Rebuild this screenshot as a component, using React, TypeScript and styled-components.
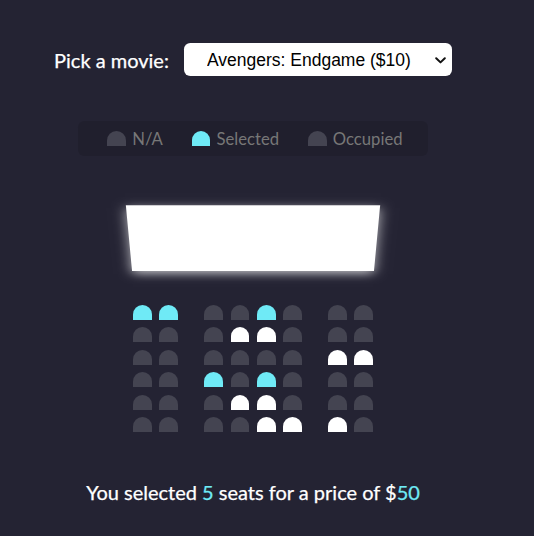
import React from "react";
import styled, { createGlobalStyle } from "styled-components";

const GlobalStyle = createGlobalStyle`
  * { box-sizing: border-box; }
  html, body { margin: 0; padding: 0; }
  body {
    background-color: #242333;
    color: #fff;
    font-family: Lato, "Noto Sans", sans-serif;
    font-size: 20px;
  }
`;

const Page = styled.div`
  display: flex;
  flex-direction: column;
  align-items: center;
  justify-content: center;
  height: 100vh;
  padding-right: 28px;
  padding-bottom: 8px;
`;

const MovieContainer = styled.div`
  margin: 25px 0;
  font-size: 20px;
  display: flex;
  align-items: center;
`;

const Label = styled.label`
  color: #fff;
  -webkit-text-stroke: 0.25px #fff;
`;

const SelectWrap = styled.span`
  position: relative;
  display: inline-block;
  margin-left: 15px;
`;

const Select = styled.select`
  display: block;
  width: 268px;
  height: 33px;
  background-color: #fff;
  border: 0;
  border-radius: 6.25px;
  font-family: "Liberation Sans", Arial, sans-serif;
  font-size: 17.5px;
  padding: 0 30px 0 23px;
  color: #000;
  outline: none;
  appearance: none;
  -webkit-appearance: none;
`;

const Chevron = styled.svg`
  position: absolute;
  right: 6px;
  top: 14px;
  width: 11px;
  height: 7px;
  pointer-events: none;
`;

const Showcase = styled.ul`
  background: rgba(0, 0, 0, 0.1);
  padding: 6.25px 12.5px;
  margin: 20px 0;
  border-radius: 6.25px;
  color: #777;
  list-style-type: none;
  display: flex;
  justify-content: space-between;
`;

const ShowcaseItem = styled.li`
  display: flex;
  align-items: center;
  justify-content: center;
  margin: 0 12.5px;
`;

const Small = styled.small`
  margin-left: 2.5px;
  font-size: 16.67px;
`;

type Status = "na" | "selected" | "occupied";

const seatColor: Record<Status, string> = {
  na: "#444451",
  selected: "#6feaf6",
  occupied: "#ffffff",
};

const Seat = styled.div<{ $status: Status; $gapRight?: boolean; $gapLeft?: boolean }>`
  background-color: ${(p) => seatColor[p.$status]};
  height: 15px;
  width: 18.75px;
  margin: 3.75px;
  margin-right: ${(p) => (p.$gapRight ? "22.5px" : "3.75px")};
  margin-left: ${(p) => (p.$gapLeft ? "22.5px" : "3.75px")};
  border-top-left-radius: 12.5px;
  border-top-right-radius: 12.5px;
`;

const Theatre = styled.div`
  perspective: 1250px;
  margin-bottom: 37.5px;
`;

const Screen = styled.div`
  background-color: #fff;
  height: 87.5px;
  width: 100%;
  margin: 18.75px 0;
  transform: rotateX(-45deg);
  box-shadow: 0 3.75px 12.5px rgba(255, 255, 255, 0.7);
`;

const Row = styled.div`
  display: flex;
`;

const Text = styled.p`
  margin: 6.25px 0;
  font-size: 20px;
  -webkit-text-stroke: 0.25px #fff;
`;

const Accent = styled.span`
  color: #6feaf6;
  -webkit-text-stroke: 0.25px #6feaf6;
`;

const layout: string[] = [
  "SSNNSNNN",
  "NNNOONNN",
  "NNNNNNOO",
  "NNSNSNNN",
  "NNNOONNN",
  "NNNNOOON",
];

const toStatus = (c: string): Status =>
  c === "S" ? "selected" : c === "O" ? "occupied" : "na";

export default function App() {
  const selectedCount = layout.join("").split("").filter((c) => c === "S").length;
  const price = 10;
  return (
    <>
      <GlobalStyle />
      <Page>
        <MovieContainer>
          <Label htmlFor="movie">Pick a movie:</Label>
          <SelectWrap>
            <Select id="movie" defaultValue="10">
              <option value="10">Avengers: Endgame ($10)</option>
              <option value="12">Joker ($12)</option>
              <option value="8">Toy Story 4 ($8)</option>
              <option value="9">The Lion King ($9)</option>
            </Select>
            <Chevron viewBox="0 0 11 7" aria-hidden="true">
              <path
                d="M1.2 1.2 L5.5 5.4 L9.8 1.2"
                fill="none"
                stroke="#111"
                strokeWidth="2"
                strokeLinecap="round"
                strokeLinejoin="round"
              />
            </Chevron>
          </SelectWrap>
        </MovieContainer>

        <Showcase>
          <ShowcaseItem>
            <Seat $status="na" />
            <Small>N/A</Small>
          </ShowcaseItem>
          <ShowcaseItem>
            <Seat $status="selected" />
            <Small>Selected</Small>
          </ShowcaseItem>
          <ShowcaseItem>
            <Seat $status="na" />
            <Small>Occupied</Small>
          </ShowcaseItem>
        </Showcase>

        <Theatre>
          <Screen />
          {layout.map((row, r) => (
            <Row key={r}>
              {row.split("").map((c, i) => (
                <Seat
                  key={i}
                  $status={toStatus(c)}
                  $gapRight={i === 1}
                  $gapLeft={i === row.length - 2}
                />
              ))}
            </Row>
          ))}
        </Theatre>

        <Text>
          You selected <Accent>{selectedCount}</Accent> seats for a price of $
          <Accent>{selectedCount * price}</Accent>
        </Text>
      </Page>
    </>
  );
}
